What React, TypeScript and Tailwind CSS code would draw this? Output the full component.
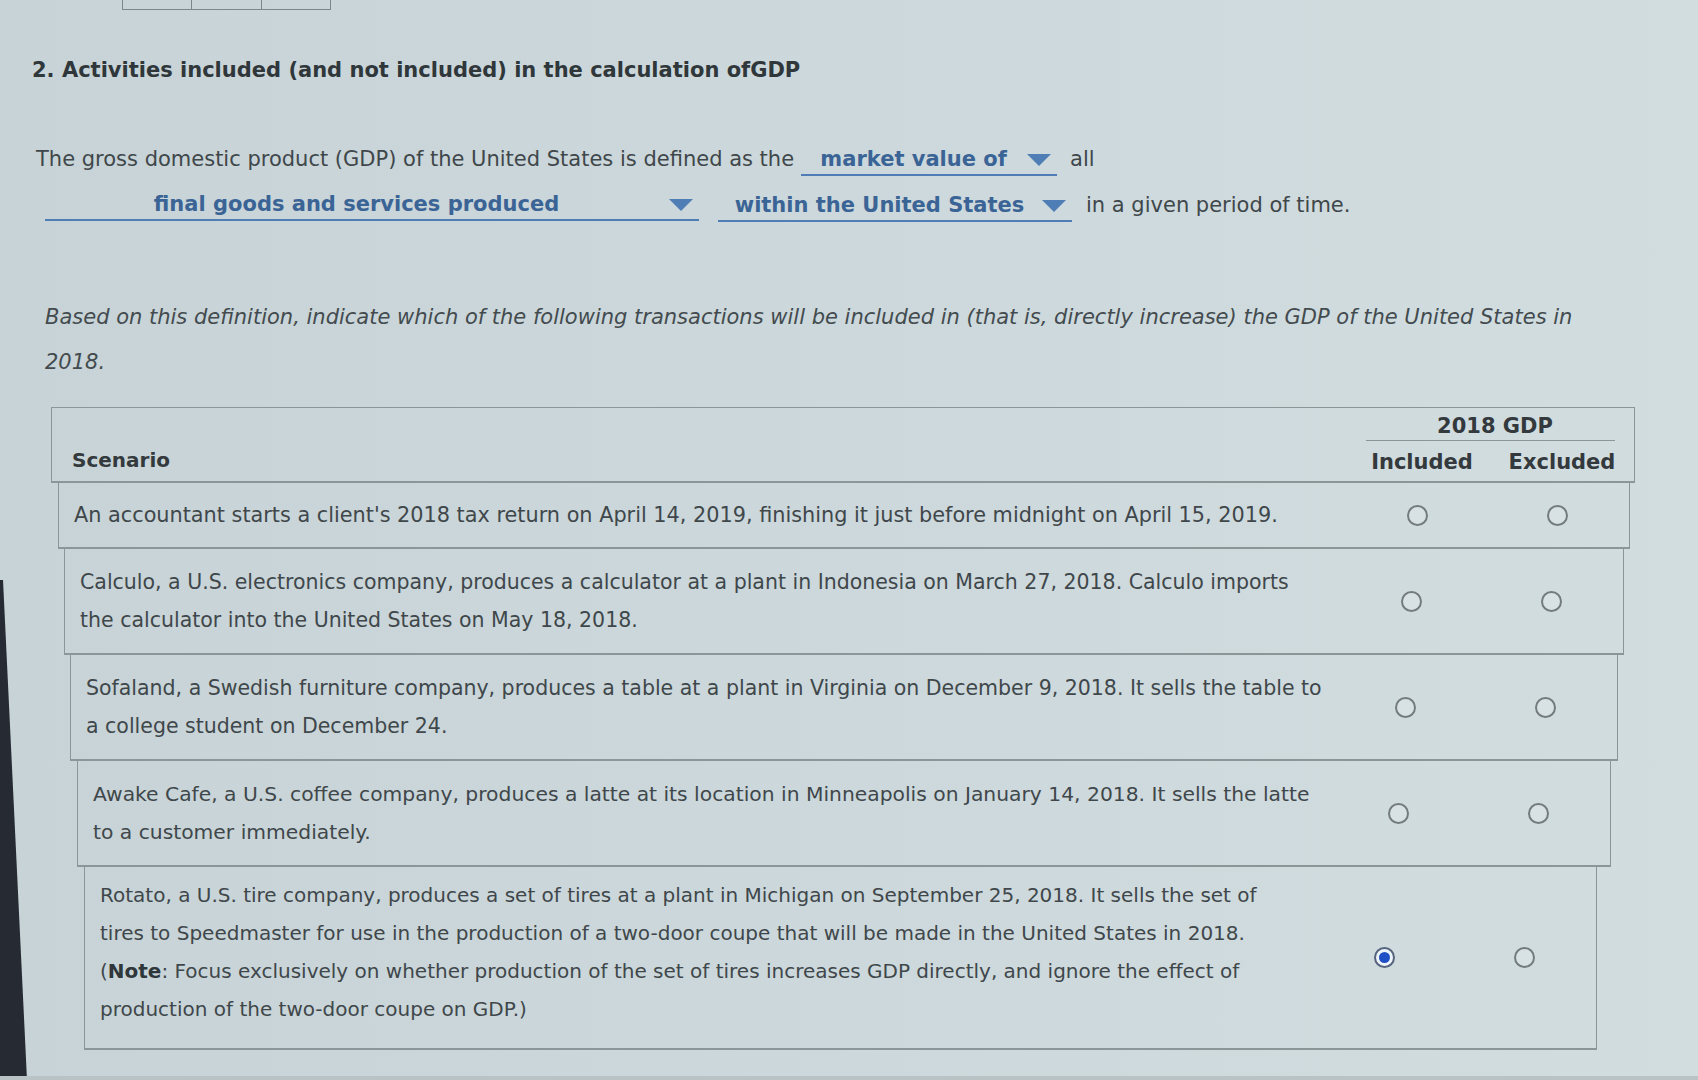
import type { ReactNode } from 'react'

const font = "font-['DejaVu_Sans',Verdana,sans-serif]"

function Arrow() {
  return (
    <svg width="26" height="14" viewBox="0 0 26 14" className="shrink-0">
      <polygon points="1,1 25,1 13,13" fill="#4f7db5" />
    </svg>
  )
}

function Dropdown({ label, width }: { label: string; width: string }) {
  return (
    <span className={`inline-flex items-center ${width} border-b-2 border-[#4f7db5] h-[30px]`}>
      <span className="flex-1 text-center font-bold text-[#3b6496] whitespace-nowrap">{label}</span>
      <span className="pr-[5px] flex items-center">
        <Arrow />
      </span>
    </span>
  )
}

function Radio({ checked }: { checked?: boolean }) {
  if (checked) {
    return (
      <span className="w-[21px] h-[21px] rounded-full border-2 border-[#55647c] bg-[#eef4fb] flex items-center justify-center">
        <span className="w-[11px] h-[11px] rounded-full bg-[#1f4fc4]" />
      </span>
    )
  }
  return <span className="w-[21px] h-[21px] rounded-full border-2 border-[#737b7f] bg-[#d8e2e4]" />
}

function Row({ children, margin, pad = 'py-[14px]', picked }: { children: ReactNode; margin: string; pad?: string; picked?: boolean }) {
  return (
    <div className={`flex border-x border-b-2 border-[#8b9699] ${margin}`}>
      <div className={`flex-1 pl-[15px] ${pad} leading-[38px] whitespace-nowrap`}>{children}</div>
      <div className="w-[140px] flex items-center justify-center">
        <Radio checked={picked} />
      </div>
      <div className="w-[140px] mr-[2px] flex items-center justify-center">
        <Radio />
      </div>
    </div>
  )
}

export default function App() {
  return (
    <div className={`relative w-full h-[1080px] overflow-hidden bg-gradient-to-r from-[#c7d3d6] via-[#ccd8db] to-[#d2dde0] text-[#3f474b] ${font}`}>
      <div className="flex ml-[122px]">
        <div className="w-[70px] h-[10px] border-x border-b border-[#7d878a]" />
        <div className="w-[70px] h-[10px] border-r border-b border-[#7d878a]" />
        <div className="w-[69px] h-[10px] border-r border-b border-[#7d878a]" />
      </div>

      <h2 className="ml-[32px] mt-[47px] text-[21px] leading-[26px] font-bold text-[#2f373b]">
        2. Activities included (and not included) in the calculation ofGDP
      </h2>

      <div className="mt-[54px] text-[21px]">
        <div className="flex items-center h-[46px] ml-[36px]">
          <span className="whitespace-nowrap">The gross domestic product (GDP) of the United States is defined as the</span>
          <span className="ml-[7px]">
            <Dropdown label="market value of" width="w-[256px]" />
          </span>
          <span className="ml-[13px]">all</span>
        </div>
        <div className="flex items-center h-[46px] ml-[45px]">
          <Dropdown label="final goods and services produced" width="w-[654px]" />
          <span className="ml-[19px]">
            <Dropdown label="within the United States" width="w-[354px]" />
          </span>
          <span className="ml-[14px] whitespace-nowrap">in a given period of time.</span>
        </div>
      </div>

      <p className="ml-[45px] mt-[66px] text-[21px] leading-[45px] italic text-[#434b4f] whitespace-nowrap">
        Based on this definition, indicate which of the following transactions will be included in (that is, directly increase) the GDP of the United States in
        <br />
        2018.
      </p>

      <div className="ml-[51px] mr-[63px] mt-[22px] text-[20.5px]">
        <div className="flex items-end border border-b-2 border-[#8b9699] font-bold text-[#33393c] text-[21px]">
          <div className="flex-1 pl-[20px] pb-[9px] leading-[24px] text-[20px]">Scenario</div>
          <div className="w-[282px] pt-[6px] pb-[7px]">
            <div className="h-[24px] leading-[24px] text-center pl-[4px]">2018 GDP</div>
            <div className="mt-[2px] ml-[14px] mr-[19px] h-px bg-[#8b9699]" />
            <div className="mt-[9px] flex leading-[24px]">
              <span className="w-[140px] text-center">Included</span>
              <span className="w-[140px] text-center">Excluded</span>
            </div>
          </div>
        </div>

        <Row margin="ml-[7px] mr-[5px]" pad="py-[13px]">
          <span className="text-[20.8px]">
            An accountant starts a client's 2018 tax return on April 14, 2019, finishing it just before midnight on April 15, 2019.
          </span>
        </Row>
        <Row margin="ml-[13px] mr-[11px]">
          Calculo, a U.S. electronics company, produces a calculator at a plant in Indonesia on March 27, 2018. Calculo imports
          <br />
          the calculator into the United States on May 18, 2018.
        </Row>
        <Row margin="ml-[19px] mr-[17px]">
          Sofaland, a Swedish furniture company, produces a table at a plant in Virginia on December 9, 2018. It sells the table to
          <br />
          a college student on December 24.
        </Row>
        <Row margin="ml-[26px] mr-[24px]">
          <span className="text-[20.3px]">
            Awake Cafe, a U.S. coffee company, produces a latte at its location in Minneapolis on January 14, 2018. It sells the latte
            <br />
            to a customer immediately.
          </span>
        </Row>
        <Row margin="ml-[33px] mr-[38px]" pad="pt-[9px] pb-[20px]" picked>
          <span className="text-[20px]">
            Rotato, a U.S. tire company, produces a set of tires at a plant in Michigan on September 25, 2018. It sells the set of
            <br />
            tires to Speedmaster for use in the production of a two-door coupe that will be made in the United States in 2018.
            <br />
            (<span className="font-bold text-[#2f373b]">Note</span>: Focus exclusively on whether production of the set of tires increases GDP directly, and ignore the effect of
            <br />
            production of the two-door coupe on GDP.)
          </span>
        </Row>
      </div>

      <svg className="absolute left-0 top-0 pointer-events-none" width="40" height="1080" viewBox="0 0 40 1080">
        <polygon points="0,580 3,580 27,1080 0,1080" fill="#262a33" />
      </svg>
      <div className="absolute left-0 right-0 bottom-0 h-[4px] bg-[#b9c3c6]" />
    </div>
  )
}
